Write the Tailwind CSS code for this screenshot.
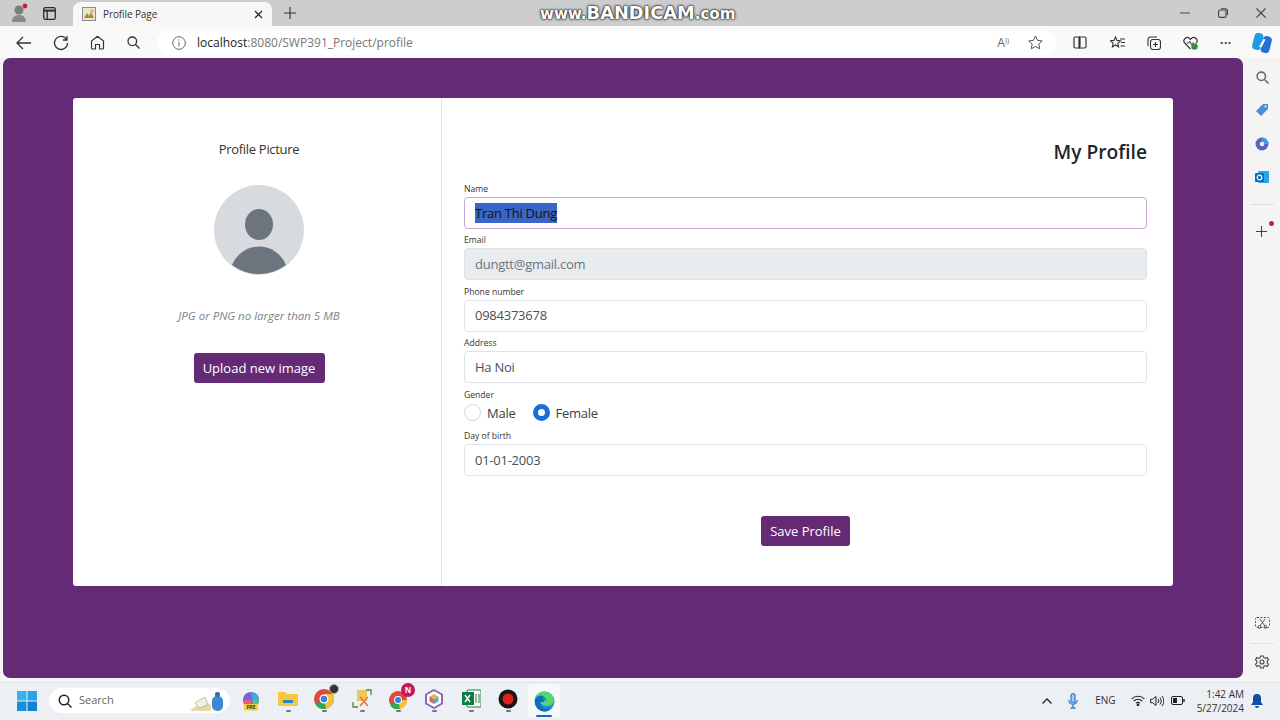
<!DOCTYPE html>
<html lang="en">
<head>
  <meta charset="UTF-8" />
  <title>Profile Page</title>
  <script src="https://cdn.jsdelivr.net/npm/@tailwindcss/browser@4"></script>
</head>
<body class="w-[1280px] h-[720px] overflow-hidden flex flex-col bg-[#f4f4f5] text-[#212529] font-['Open_Sans','Noto_Sans',sans-serif]">

  <!-- Tab strip -->
  <div class="h-[26px] shrink-0 bg-[#cdcdcd] flex items-end relative">
    <div class="w-[73px] h-full flex items-center">
      <svg class="ml-[11px] w-[17px] h-[20px]" viewBox="0 0 17 20"><circle cx="8" cy="7" r="4.5" fill="#7b7b7b"/><path d="M1 19c0-5 3-7 7-7s7 2 7 7z" fill="#8a8a8a"/><circle cx="14" cy="3" r="2.4" fill="#c8232c"/></svg>
      <svg class="ml-[15px] w-[13px] h-[13px]" viewBox="0 0 13 13" fill="none" stroke="#2b2b2b" stroke-width="1.3"><rect x=".7" y=".7" width="11.6" height="11.6" rx="1.5"/><path d="M.7 3.6h11.6" stroke-width="2"/><path d="M4.2 3.6v8.7"/></svg>
    </div>
    <div class="w-[199px] h-[24px] bg-[#f7f7f7] rounded-t-lg flex items-center pl-[9px] pr-[9px]">
      <svg class="w-[14px] h-[14px]" viewBox="0 0 14 14"><rect x=".5" y=".5" width="13" height="13" fill="#e9e4d4" stroke="#8c8c8c"/><path d="M2 11l3-5 2 3 2-4 3 6z" fill="#a8902f"/><circle cx="10" cy="4" r="1.6" fill="#d9b44a"/></svg>
      <span class="ml-[7px] text-[10px] tracking-[-.1px] text-[#333] flex-1">Profile Page</span>
      <svg class="w-[9px] h-[9px]" viewBox="0 0 9 9" stroke="#222" stroke-width="1.2"><path d="M1 1l7 7M8 1l-7 7"/></svg>
    </div>
    <svg class="ml-[12px] mb-[7px] w-[12px] h-[12px]" viewBox="0 0 12 12" stroke="#333" stroke-width="1.1"><path d="M6 0v12M0 6h12"/></svg>
    <div class="flex-1 h-full flex items-center justify-between">
      <span class="ml-[244px] mt-[1px] font-['DejaVu_Sans',sans-serif] font-bold text-white text-[15.100px] leading-none [text-shadow:0_0_3px_#222,0_0_2px_#222,0_0_1px_#111]">www.<span class="text-[17.800px]">BANDICAM</span>.com</span>
      <div class="flex items-center gap-[28px] mr-[14px]">
        <svg class="w-[10px] h-[10px]" viewBox="0 0 10 10" stroke="#555" stroke-width="1.1"><path d="M0 5h10"/></svg>
        <svg class="w-[10px] h-[10px]" viewBox="0 0 10 10" fill="none" stroke="#444" stroke-width="1.1"><rect x=".6" y="2" width="7.4" height="7.4" rx="1.5"/><path d="M3 .7h4.5a2 2 0 0 1 2 2V7"/></svg>
        <svg class="w-[10px] h-[10px]" viewBox="0 0 10 10" stroke="#444" stroke-width="1.1"><path d="M.5.5l9 9M9.5.5l-9 9"/></svg>
      </div>
    </div>
  </div>

  <!-- Address bar -->
  <div class="h-[32px] shrink-0 bg-[#f9f9f9] flex items-center pt-[1px]">
    <svg class="ml-[16px] w-[16px] h-[14px]" viewBox="0 0 16 14" fill="none" stroke="#333" stroke-width="1.3"><path d="M15 7H1M7 1L1 7l6 6"/></svg>
    <svg class="ml-[21px] w-[16px] h-[16px]" viewBox="0 0 16 16" fill="none" stroke="#333" stroke-width="1.3"><path d="M13.5 4.5A6.5 6.5 0 1 0 14.5 8M14 1v4h-4"/></svg>
    <svg class="ml-[21px] w-[15px] h-[15px]" viewBox="0 0 15 15" fill="none" stroke="#333" stroke-width="1.2"><path d="M1.5 6L7.5 1.2 13.500 6v7a1 1 0 0 1-1 1h-3V9.500h-4V14h-3a1 1 0 0 1-1-1z"/></svg>
    <svg class="ml-[22px] w-[13px] h-[13px]" viewBox="0 0 13 13" fill="none" stroke="#333" stroke-width="1.3"><circle cx="5.300" cy="5.300" r="4.300"/><path d="M8.500 8.500L12.500 12.500"/></svg>
    <div class="ml-[17px] w-[899px] h-[25px] bg-white rounded-full flex items-center pl-[15px] pr-[13px]">
      <svg class="w-[14px] h-[14px]" viewBox="0 0 14 14" fill="none" stroke="#666"><circle cx="7" cy="7" r="6.300"/><path d="M7 6v4.500M7 3.500v1.200"/></svg>
      <span class="ml-[11px] text-[12px] text-[#777] flex-1"><span class="text-[#222]">localhost</span>:8080/SWP391_Project/profile</span>
      <span class="text-[12px] text-[#666] mr-[19px]">A<sup class="text-[7px]">))</sup></span>
      <svg class="w-[15px] h-[15px]" viewBox="0 0 15 15" fill="none" stroke="#555"><path d="M7.500 1l2 4.300 4.700.6-3.400 3.200.9 4.700-4.200-2.300-4.200 2.300.9-4.700L.8 5.900l4.700-.6z"/></svg>
    </div>
    <svg class="ml-[17px] w-[14px] h-[13px]" viewBox="0 0 14 13" fill="none" stroke="#333" stroke-width="1.2"><path d="M6 1H2.500A1.500 1.500 0 0 0 1 2.500v8A1.500 1.500 0 0 0 2.500 12H6zM8 1h3.500A1.500 1.500 0 0 1 13 2.500v8a1.500 1.500 0 0 1-1.500 1.500H8M7 0v13"/></svg>
    <svg class="ml-[23px] w-[15px] h-[14px]" viewBox="0 0 15 14" fill="none" stroke="#333" stroke-width="1.1"><path d="M5.500 1l1.500 3.400 3.500.4-2.600 2.400.7 3.600-3.100-1.800-3.100 1.800.7-3.600L.5 4.800 4 4.400zM10 3h5M11 6.500h4M10.500 10H15"/></svg>
    <svg class="ml-[22px] w-[14px] h-[14px]" viewBox="0 0 14 14" fill="none" stroke="#333" stroke-width="1.1"><rect x="3.500" y="3.500" width="10" height="10" rx="2.500"/><path d="M1 10V3.500A2.500 2.500 0 0 1 3.500 1H10M8.500 6v5M6 8.500h5"/></svg>
    <svg class="ml-[22px] w-[15px] h-[14px]" viewBox="0 0 15 14" fill="none" stroke="#333" stroke-width="1.200"><path d="M7.500 13L1.800 7.200a3.400 3.400 0 0 1 5-4.600l.7.800.7-.8a3.400 3.400 0 0 1 5 4.600"/><path d="M3.500 7h2l1.200-2 1.600 3.500 1-1.500h1.500" stroke-width=".9"/><circle cx="11.500" cy="10.500" r="3.200" fill="#3a8a3e" stroke="none"/></svg>
    <span class="ml-[22px] w-[13px] text-[12px] font-bold leading-none text-[#333] tracking-[.5px] mb-[5px]">...</span>
    <svg class="ml-[19px] w-[20px] h-[20px]" viewBox="0 0 20 20"><g transform="rotate(14 10 10)"><rect x="1" y="1" width="9" height="17" rx="4" fill="#1b9de2"/><rect x="10" y="2" width="9" height="17" rx="4" fill="#2670d9"/></g><path d="M11.500 6l2 .5-4 8-2.500-.5z" fill="#fff"/></svg>
  </div>

  <!-- Page + Edge sidebar -->
  <div class="h-[620px] shrink-0 flex">
    <main class="ml-[3px] w-[1240px] bg-[#652a75] rounded-[7px] pt-[40px] pl-[70px]">
      <div class="w-[1100px] h-[488px] bg-white rounded-[3px] flex">

        <!-- Profile picture column -->
        <section class="w-[369px] border-r border-[#e6e6e6] flex flex-col items-center pt-[41px] pl-[4px]">
          <h2 class="text-[13px] tracking-[-.3px] leading-[20px] text-[#333]">Profile Picture</h2>
          <svg class="mt-[26px] w-[90px] h-[90px]" viewBox="0 0 90 90">
            <circle cx="45" cy="45" r="45" fill="#d7dbdf"/>
            <ellipse cx="45" cy="39.500" rx="14" ry="15.500" fill="#6c757d"/>
            <path d="M18 80a29 29 0 0 1 54 0 45 45 0 0 1-54 0z" fill="#6c757d"/>
          </svg>
          <p class="mt-[31px] text-[11.500px] leading-[20px] italic text-[#7a828a]">JPG or PNG no larger than 5 MB</p>
          <button class="mt-[27px] w-[131px] h-[30px] pt-[2px] bg-[#652a75] rounded-[3px] text-white text-[13px]">Upload new image</button>
        </section>

        <!-- Form column -->
        <section class="flex-1 pl-[22px] pr-[26px] pt-[39px]">
          <h1 class="text-right text-[19.200px] leading-[30px] font-semibold text-[#212529]">My Profile</h1>
          <form class="mt-[15.500px] flex flex-col">
            <label class="text-[8.600px] leading-[13px] text-[#333]">Name</label>
            <div class="mt-[1px] h-[32px] border border-[#c9a7cf] rounded-[4px] flex items-center px-[10px] text-[13px] tracking-[-.25px] text-[#495057]"><span class="bg-[#3a65c4] text-[#111] leading-[20px]">Tran Thi Dung</span></div>

            <label class="mt-[5.500px] text-[8.600px] leading-[13px] text-[#333]">Email</label>
            <div class="mt-[1px] h-[32px] pt-[1px] bg-[#e9ecef] border border-[#dee2e6] rounded-[4px] flex items-center px-[10px] text-[13px] tracking-[-.25px] text-[#6c757d]">dungtt@gmail.com</div>

            <label class="mt-[5.500px] text-[8.600px] leading-[13px] text-[#333]">Phone number</label>
            <div class="mt-[1px] h-[32px] pt-[1px] border border-[#dee2e6] rounded-[4px] flex items-center px-[10px] text-[13px] tracking-[-.25px] text-[#495057]">0984373678</div>

            <label class="mt-[5.500px] text-[8.600px] leading-[13px] text-[#333]">Address</label>
            <div class="mt-[1px] h-[32px] pt-[1px] border border-[#dee2e6] rounded-[4px] flex items-center px-[10px] text-[13px] tracking-[-.25px] text-[#495057]">Ha Noi</div>

            <label class="mt-[5.500px] text-[8.600px] leading-[13px] text-[#333]">Gender</label>
            <div class="mt-[1px] h-[20px] flex items-center text-[13px] tracking-[-.25px] text-[#3a3f44]">
              <span class="w-[17px] h-[17px] rounded-full border border-[#ced4da]"></span>
              <span class="ml-[6px] pt-[2px]">Male</span>
              <span class="ml-[17px] w-[17px] h-[17px] rounded-full border-[5px] border-[#1a6ed8] bg-white"></span>
              <span class="ml-[6px] pt-[2px]">Female</span>
            </div>

            <label class="mt-[7.500px] text-[8.600px] leading-[13px] text-[#333]">Day of birth</label>
            <div class="mt-[1px] h-[32px] pt-[1px] border border-[#dee2e6] rounded-[4px] flex items-center px-[10px] text-[13px] tracking-[-.25px] text-[#495057]">01-01-2003</div>

            <button type="button" class="mt-[39.500px] self-center w-[89px] h-[30px] pt-[2px] bg-[#652a75] rounded-[3px] text-white text-[13px]">Save Profile</button>
          </form>
        </section>
      </div>
    </main>

    <!-- Edge sidebar -->
    <aside class="ml-[1px] w-[36px] flex flex-col items-center pt-[13px]">
      <svg class="w-[13px] h-[13px]" viewBox="0 0 13 13" fill="none" stroke="#6d6d6d" stroke-width="1.600"><circle cx="5.300" cy="5.300" r="4.200"/><path d="M8.500 8.500l4 4"/></svg>
      <svg class="mt-[19px] w-[14px] h-[14px]" viewBox="0 0 14 14"><path d="M1 8L8 1h5v5l-7 7z" fill="#4a8fd8"/><circle cx="10.500" cy="3.500" r="1" fill="#fff"/></svg>
      <svg class="mt-[20px] w-[14px] h-[14px]" viewBox="0 0 14 14"><circle cx="7" cy="7" r="6.500" fill="#5b62c7"/><path d="M7 .5A6.500 6.500 0 0 1 13.500 7H9a2 2 0 0 0-2-2z" fill="#38a3d9"/><circle cx="7" cy="7" r="2.300" fill="#f4f4f5"/></svg>
      <svg class="mt-[19px] w-[14px] h-[14px]" viewBox="0 0 14 14"><rect x="3" y="1" width="11" height="12" rx="1" fill="#28a8ea"/><rect x="0" y="3" width="9" height="9" rx="1" fill="#0f6cbd"/><circle cx="4.500" cy="7.500" r="2.300" fill="none" stroke="#fff" stroke-width="1.200"/></svg>
      <div class="mt-[20px] w-[24px] border-t border-[#dcdcdc]"></div>
      <div class="relative mt-[21px] -ml-[2px] w-[11px] h-[11px]">
        <svg class="w-[11px] h-[11px]" viewBox="0 0 11 11" stroke="#444" stroke-width="1.100"><path d="M5.500 0v11M0 5.500h11"/></svg>
        <span class="absolute -top-[5px] -right-[7px] w-[5px] h-[5px] rounded-full bg-[#c8232c]"></span>
      </div>
      <svg class="mt-auto w-[15px] h-[13px]" viewBox="0 0 15 13" fill="none" stroke="#555"><rect x=".5" y=".5" width="14" height="10" rx="1.500" stroke-dasharray="2 1.500"/><path d="M5 2l5 7M10 2L5 9"/><circle cx="4.500" cy="10" r="1.400"/><circle cx="10.500" cy="10" r="1.400"/></svg>
      <div class="mt-[13px] w-[24px] border-t border-[#e2e2e2]"></div>
      <svg class="mt-[11px] mb-[9px] w-[14px] h-[14px]" viewBox="0 0 14 14" fill="none" stroke="#444" stroke-width="1.100"><path d="M5.500 1h3l.4 1.800 1.700.7 1.600-1 1.300 2.300-1.300 1.300v1.800l1.300 1.300-1.300 2.300-1.600-1-1.700.7L8.500 13h-3l-.4-1.800-1.700-.7-1.600 1L.5 9.200l1.300-1.300V6.100L.5 4.800l1.300-2.300 1.600 1 1.700-.7z"/><circle cx="7" cy="7" r="2"/></svg>
    </aside>
  </div>

  <!-- Windows taskbar -->
  <footer class="mt-[4px] flex-1 bg-[#eceff3] border-t border-[#e0e2e6] flex items-center pb-[2px] relative">
    <svg class="ml-[17px] w-[20px] h-[20px]" viewBox="0 0 20 20"><path d="M0 0h9.500v9.500H0z" fill="#39b1ee"/><path d="M10.500 0H20v9.500h-9.500z" fill="#2aa3e8"/><path d="M0 10.500h9.500V20H0z" fill="#1a8fdc"/><path d="M10.500 10.500H20V20h-9.500z" fill="#1282d4"/></svg>
    <div class="ml-[12px] w-[181px] h-[25px] bg-white rounded-full flex items-center pl-[9px] pr-[6px]">
      <svg class="w-[14px] h-[14px]" viewBox="0 0 14 14" fill="none" stroke="#222" stroke-width="1.400"><circle cx="6" cy="6" r="4.800"/><path d="M9.500 9.500l4 4"/></svg>
      <span class="ml-[7px] text-[11px] text-[#666] flex-1">Search</span>
      <svg class="w-[36px] h-[24px]" viewBox="0 0 36 24"><path d="M2 21l14-9 7 4v6H5z" fill="#e7d9a8"/><path d="M7 14l10-6 3 8-9 3z" fill="#f3f1e4" stroke="#8aa36b" stroke-width=".6"/><rect x="24" y="7" width="11" height="15" rx="5" fill="#3d87d6"/><rect x="27" y="3" width="5" height="5" rx="2" fill="#2f6fb8"/></svg>
    </div>
    <svg class="ml-[11px] w-[20px] h-[20px]" viewBox="0 0 20 20"><circle cx="10" cy="9" r="8" fill="#7b62d0"/><path d="M10 1a8 8 0 0 1 8 8h-7z" fill="#3fa9e0"/><path d="M2 9a8 8 0 0 0 8 8V9z" fill="#e65a8d"/><path d="M12 9h6a8 8 0 0 1-8 8z" fill="#57c27a"/><rect x="3" y="13" width="14" height="6.500" rx="1" fill="#f2d13f"/><text x="10" y="18" font-size="5" font-weight="700" text-anchor="middle" fill="#333">PRE</text></svg>
    <div class="ml-[17px] flex flex-col items-center w-[20px]">
      <svg class="w-[20px] h-[17px]" viewBox="0 0 20 17"><path d="M0 2h7l2 2h11v12H0z" fill="#f6c93a"/><rect x="5" y="10" width="10" height="3" fill="#2a84d2"/></svg>
      <span class="mt-[3px] w-[5px] h-[2px] rounded bg-[#777]"></span>
    </div>

    <!-- pinned apps -->
    <div class="ml-[16px] flex flex-col items-center w-[20px] relative">
      <svg class="w-[20px] h-[20px]" viewBox="0 0 20 20"><circle cx="10" cy="10" r="10" fill="#dd4b3e"/><path d="M10 10L1.300 15A10 10 0 0 0 12 19.800z" fill="#2fa84f"/><path d="M10 10l2 9.800A10 10 0 0 0 20 10V5H10z" fill="#f6c338"/><circle cx="10" cy="10" r="4.500" fill="#fff"/><circle cx="10" cy="10" r="3.300" fill="#3c7de6"/></svg>
      <span class="absolute -top-[5px] -right-[5px] w-[10px] h-[10px] rounded-full bg-[#333] border border-[#aaa]"></span>
      <span class="mt-[1px] w-[5px] h-[2px] rounded bg-[#777]"></span>
    </div>
    <div class="ml-[18px] flex flex-col items-center w-[20px]">
      <svg class="w-[20px] h-[20px]" viewBox="0 0 20 20" fill="none"><rect x="5" y="1" width="10" height="11" fill="#f0c75e"/><path d="M1 13v5h5M14 1h5v5" stroke="#4a8a3e" stroke-width="1.300"/><path d="M8 8l8 9M16 8l-8 9" stroke="#dd7a3a" stroke-width="1.500"/></svg>
      <span class="mt-[1px] w-[5px] h-[2px] rounded bg-[#777]"></span>
    </div>
    <div class="ml-[16px] flex flex-col items-center w-[20px] relative">
      <svg class="w-[20px] h-[20px]" viewBox="0 0 20 20"><circle cx="10" cy="11" r="9" fill="#dd4b3e"/><path d="M10 11L2 16a9 9 0 0 0 10 4z" fill="#2fa84f"/><path d="M10 11l2 9a9 9 0 0 0 7-9z" fill="#f6c338"/><circle cx="10" cy="11" r="4" fill="#fff"/><circle cx="10" cy="11" r="3" fill="#3c7de6"/></svg>
      <span class="absolute -top-[6px] -right-[7px] w-[14px] h-[14px] rounded-full bg-[#c2185b] text-white text-[8px] leading-[14px] text-center font-bold">N</span>
      <span class="mt-[1px] w-[5px] h-[2px] rounded bg-[#777]"></span>
    </div>
    <div class="ml-[16px] flex flex-col items-center w-[20px]">
      <svg class="w-[18px] h-[20px]" viewBox="0 0 18 20"><path d="M9 1l8 4.500v9L9 19l-8-4.500v-9z" fill="#fff" stroke="#8a6bb8" stroke-width="2"/><path d="M9 5l4.500 2.500L9 10 4.500 7.500z" fill="#e6b93e"/><path d="M9 10v5l4.500-2.500v-5z" fill="#5aa9d6"/><path d="M9 10v5l-4.500-2.500v-5z" fill="#d96a4a"/></svg>
      <span class="mt-[1px] w-[5px] h-[2px] rounded bg-[#777]"></span>
    </div>
    <div class="ml-[17px] flex flex-col items-center w-[20px]">
      <svg class="w-[19px] h-[19px]" viewBox="0 0 19 19"><rect x="5" y="1" width="14" height="17" rx="1" fill="#fff" stroke="#1f7a45"/><rect x="0" y="3" width="12" height="13" fill="#107c41"/><path d="M3 6l5 7M8 6l-5 7" stroke="#fff" stroke-width="1.400"/><path d="M14 5v9M17 5v9" stroke="#1f7a45"/></svg>
      <span class="mt-[2px] w-[5px] h-[2px] rounded bg-[#777]"></span>
    </div>
    <div class="ml-[17px] flex flex-col items-center w-[20px]">
      <svg class="w-[20px] h-[20px]" viewBox="0 0 20 20"><circle cx="10" cy="10" r="9.500" fill="#161616"/><circle cx="10" cy="10" r="5.500" fill="#e0201c"/></svg>
      <span class="mt-[1px] w-[5px] h-[2px] rounded bg-[#777]"></span>
    </div>
    <div class="ml-[10px] h-[33px] w-[32px] bg-[#f6f8fb] rounded-[3px] flex flex-col items-center justify-end">
      <svg class="w-[21px] h-[21px]" viewBox="0 0 21 21"><circle cx="10.500" cy="10.500" r="10" fill="#1a8fd0"/><path d="M20 9c-.5-5-5-8.500-10-8.500C6 .5 2.500 3 1.200 6.500 3 4.500 6 4 8.500 4.800 12 6 12.500 9 12 10H6.500c0 3 3 5 6.500 5 2.500 0 5-1 6-2.500.6-1 1-2.300 1-3.500z" fill="#54d66f"/><path d="M8.500 4.800c-3.500 0-7.500 2-7.500 6.200 0 5 4.500 9.500 9.500 9.500 3 0 5.500-1.500 7-3.500-2 1-6 1.500-9 0-2-1-3-3-2.500-6h4" fill="#0f6cbd"/></svg>
      <span class="mt-[3px] w-[16px] h-[2px] rounded bg-[#0f6cbd]"></span>
    </div>

    <!-- System tray -->
    <div class="ml-auto flex items-center h-full text-[#333]">
      <svg class="w-[10px] h-[6px]" viewBox="0 0 10 6" fill="none" stroke="#222" stroke-width="1.300"><path d="M.5 5.500L5 1l4.500 4.500"/></svg>
      <svg class="ml-[16px] w-[10px] h-[16px]" viewBox="0 0 10 16" fill="none" stroke="#3f7fd0" stroke-width="1.300"><rect x="3" y=".7" width="4" height="9" rx="2" fill="#a9c8ee"/><path d="M.7 7a4.300 4.300 0 0 0 8.600 0M5 11.500V15M2.500 15h5"/></svg>
      <span class="ml-[17px] text-[10px]">ENG</span>
      <svg class="ml-[15px] w-[14px] h-[11px]" viewBox="0 0 14 11" fill="none" stroke="#222" stroke-width="1.100"><path d="M.6 3.800a9.200 9.200 0 0 1 12.800 0M2.800 6a6 6 0 0 1 8.400 0M5 8.200a3 3 0 0 1 4 0"/><circle cx="7" cy="9.800" r=".8" fill="#222"/></svg>
      <svg class="ml-[5px] w-[14px] h-[12px]" viewBox="0 0 14 12" fill="none" stroke="#222"><path d="M.6 4.300h2L6 1.500v9L2.600 7.700h-2zM8 4a3 3 0 0 1 0 4M10 2.500a5.500 5.500 0 0 1 0 7M12 1a7.500 7.500 0 0 1 0 10"/></svg>
      <svg class="ml-[7px] w-[14px] h-[9px]" viewBox="0 0 14 9" fill="none" stroke="#222"><rect x=".5" y=".5" width="11" height="8" rx="1.500"/><rect x="2" y="2" width="4" height="5" fill="#222" stroke="none"/><path d="M13 3v3" stroke-width="1.400"/></svg>
      <div class="ml-[12px] text-[10px] leading-[14px] text-right text-[#333]">
        <div>1:42 AM</div>
        <div>5/27/2024</div>
      </div>
      <svg class="ml-[7px] mr-[17px] w-[12px] h-[14px]" viewBox="0 0 12 14"><path d="M6 0a4 4 0 0 1 4 4v4l2 3H0l2-3V4a4 4 0 0 1 4-4z" fill="#0f4f9e"/><path d="M4 12h4a2 2 0 0 1-4 0z" fill="#0f4f9e"/></svg>
    </div>
  </footer>
</body>
</html>
